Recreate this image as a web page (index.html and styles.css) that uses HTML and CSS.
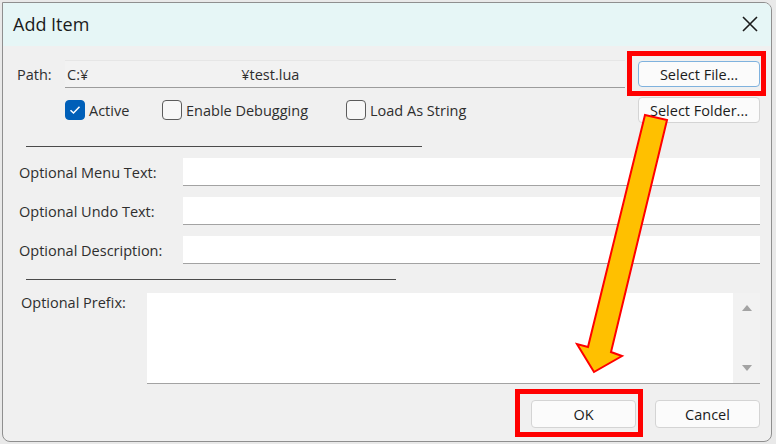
FILE: index.html
```html
<!DOCTYPE html>
<html lang="ja">
<head>
    <meta charset="UTF-8">
    <title>Add Item</title>
    <link rel="stylesheet" href="styles.css">
</head>
<body>

    <div class="window">
        <div class="titlebar">
            <span class="title">Add Item</span>
            <svg class="close" width="16" height="16" viewBox="0 0 16 16">
                <path d="M1 1 L15 15 M15 1 L1 15" stroke="#1b1b1b" stroke-width="1.6" fill="none"/>
            </svg>
        </div>

        <div class="dialog">
            <!-- path row -->
            <div class="path-row">
                <span class="path-label">Path:</span>
                <div class="path-field">
                    <span>C:¥</span>
                    <span class="path-end">¥test.lua</span>
                </div>
                <button class="btn btn-side btn-focus">Select File...</button>
            </div>

            <div class="check-row">
                <div class="checks">
                    <label class="check"><span class="box box-on">
                        <svg width="12" height="10" viewBox="0 0 12 10"><path d="M1.5 5.2 L4.5 8 L10.5 1.8" stroke="#fff" stroke-width="1.5" fill="none"/></svg>
                    </span>Active</label>
                    <label class="check"><span class="box"></span>Enable Debugging</label>
                    <label class="check"><span class="box"></span>Load As String</label>
                </div>
                <button class="btn btn-side">Select Folder...</button>
            </div>

            <div class="rule rule-1"></div>

            <div class="fields">
                <div class="field-row">
                    <span class="field-label">Optional Menu Text:</span>
                    <div class="text-input"></div>
                </div>
                <div class="field-row">
                    <span class="field-label">Optional Undo Text:</span>
                    <div class="text-input"></div>
                </div>
                <div class="field-row">
                    <span class="field-label">Optional Description:</span>
                    <div class="text-input"></div>
                </div>
            </div>

            <div class="rule rule-2"></div>

            <div class="prefix-row">
                <span class="prefix-label">Optional Prefix:</span>
                <div class="text-area">
                    <div class="scrollbar">
                        <span class="arrow-up"></span>
                        <span class="arrow-down"></span>
                    </div>
                </div>
            </div>

            <div class="button-row">
                <button class="btn btn-main">OK</button>
                <button class="btn btn-main">Cancel</button>
            </div>
        </div>

        <!-- annotations drawn over the dialog -->
        <div class="mark mark-file"></div>
        <div class="mark mark-ok"></div>
        <svg class="pointer" width="776" height="444" viewBox="0 0 776 444">
            <polygon points="645,115 667,120 611,352 622,356 594,372 577,344 588,347"
                     fill="#ffc000" stroke="#ff0000" stroke-width="2" stroke-linejoin="miter"/>
        </svg>
    </div>

</body>
</html>
```

FILE: styles.css
```css
body {
    margin: 0;
    width: 776px;
    height: 444px;
    overflow: hidden;
    background-color: #e9e9e9;
    font-family: "Open Sans", "Noto Sans CJK JP", sans-serif;
    color: #2e2e2e;
}

.window {
    position: relative;
    box-sizing: border-box;
    width: 770px;
    height: 440px;
    margin: 2px 0 0 2px;
    border: 1px solid #8f8f8f;
    border-radius: 0 8px 8px 8px;
    background-color: #f0f0f0;
    overflow: hidden;
}

/* title bar */
.titlebar {
    height: 43px;
    display: flex;
    align-items: center;
    justify-content: space-between;
    padding: 0 13px 0 10px;
    background-color: #e6f6f6;
}

.title {
    font-size: 18px;
    color: #1b1b1b;
    margin-top: -1px;
}

.close {
    margin-top: -2px;
}

.dialog {
    font-size: 14.5px;
}

/* path row */
.path-row {
    display: flex;
    align-items: center;
    margin-top: 14px;
    padding: 0 11px 0 14px;
    height: 28px;
}

.path-label {
    width: 48px;
}

.path-field {
    box-sizing: border-box;
    width: 560px;
    height: 28px;
    display: flex;
    align-items: center;
    padding-left: 2px;
    background-color: #f2f2f2;
    border-top: 1px solid #e6e6e6;
    border-bottom: 1px solid #9c9c9c;
}

.path-end {
    margin-left: 153px;
}

.btn {
    box-sizing: border-box;
    font-family: inherit;
    font-size: 14.5px;
    color: #1b1b1b;
    background-color: #fbfbfb;
    border: 1px solid #d4d4d4;
    border-radius: 4px;
    padding: 0;
}

.btn-side {
    width: 122px;
    height: 26px;
    margin-left: auto;
}

.btn-focus {
    border-color: #7fb2de;
}

/* checkboxes */
.check-row {
    display: flex;
    align-items: center;
    height: 26px;
    margin-top: 9px;
    padding: 0 11px 0 62px;
}

.checks {
    display: grid;
    grid-template-columns: 97px 184px auto;
}

.check {
    display: flex;
    align-items: center;
    gap: 4px;
}

.box {
    box-sizing: border-box;
    width: 20px;
    height: 20px;
    border: 1px solid #5c5c5c;
    border-radius: 4px;
    background-color: #f7f7f7;
    display: flex;
    align-items: center;
    justify-content: center;
}

.box-on {
    background-color: #005fb8;
    border-color: #005fb8;
}

/* separators */
.rule {
    height: 1px;
    background-color: #4a4a4a;
    margin-left: 23px;
}

.rule-1 {
    width: 396px;
    margin-top: 23px;
    margin-bottom: 11px;
}

.rule-2 {
    width: 370px;
    margin-top: 15px;
    margin-bottom: 13px;
}

/* text fields */
.fields {
    display: flex;
    flex-direction: column;
    gap: 11px;
}

.field-row {
    display: flex;
    align-items: center;
    padding: 0 10px 0 16px;
}

.field-label {
    width: 164px;
}

.text-input {
    box-sizing: border-box;
    width: 577px;
    height: 28px;
    background-color: #fff;
    border-bottom: 1px solid #a3a3a3;
}

.prefix-row {
    display: flex;
    align-items: flex-start;
    padding: 0 10px 0 18px;
}

.prefix-label {
    width: 126px;
    margin-top: 0;
}

.text-area {
    box-sizing: border-box;
    width: 613px;
    height: 91px;
    background-color: #fff;
    border-bottom: 1px solid #a3a3a3;
    display: flex;
    justify-content: flex-end;
}

.scrollbar {
    width: 27px;
    height: 100%;
    background-color: #f2f2f2;
    position: relative;
}

.arrow-up,
.arrow-down {
    position: absolute;
    left: 9px;
    width: 0;
    height: 0;
    border-left: 5px solid transparent;
    border-right: 5px solid transparent;
}

.arrow-up {
    top: 12px;
    border-bottom: 6px solid #a3a3a3;
}

.arrow-down {
    top: 72px;
    border-top: 6px solid #a3a3a3;
}

/* bottom buttons */
.button-row {
    display: flex;
    justify-content: flex-end;
    gap: 19px;
    margin-top: 16px;
    padding-right: 11px;
}

.btn-main {
    width: 105px;
    height: 28px;
}

/* red annotation boxes */
.mark {
    position: absolute;
    box-sizing: border-box;
    border: 5px solid #ff0000;
}

.mark-file {
    left: 624px;
    top: 48px;
    width: 139px;
    height: 45px;
}

.mark-ok {
    left: 512px;
    top: 386px;
    width: 128px;
    height: 48px;
}

.pointer {
    position: absolute;
    left: -3px;
    top: -3px;
    pointer-events: none;
}
```
